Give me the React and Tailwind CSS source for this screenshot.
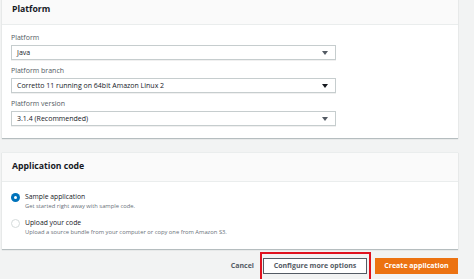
import React from "react";

function Select({ value, dark }) {
  return (
    <div className="h-[15px] w-[325px] border border-[#c6cdce] bg-white flex items-center justify-between pl-[5px] pr-[7px] shadow-[0_1px_0_0_rgba(0,0,0,0.06)]">
      <span className="text-[7px] text-[#16191f] leading-none">{value}</span>
      <svg width="6" height="4" viewBox="0 0 6 4">
        <path d="M0 0 L6 0 L3 4 Z" fill={dark ? "#16191f" : "#545b64"} />
      </svg>
    </div>
  );
}

function Field({ label, value, dark }) {
  return (
    <div className="flex flex-col">
      <div className="h-[13px] flex items-center text-[7px] text-[#545b64] leading-none pb-[2px]">{label}</div>
      <Select value={value} dark={dark} />
    </div>
  );
}

function Radio({ checked, title, sub }) {
  return (
    <div className="flex">
      <div className="w-[13px] h-[10px] flex items-center">
        {checked ? (
          <div className="w-[9px] h-[9px] rounded-full bg-[#0073bb] flex items-center justify-center">
            <div className="w-[3px] h-[3px] rounded-full bg-white" />
          </div>
        ) : (
          <div className="w-[9px] h-[9px] rounded-full border border-[#d5dbdb] bg-white" />
        )}
      </div>
      <div className="flex flex-col ml-[1px]">
        <div className="h-[10px] flex items-center text-[6.8px] text-[#16191f] leading-none">{title}</div>
        <div className="h-[9px] flex items-center text-[5.8px] text-[#687078] leading-none">{sub}</div>
      </div>
    </div>
  );
}

export default function App() {
  return (
    <div
      className="w-[474px] h-[279px] bg-[#f2f3f3] overflow-hidden"
      style={{ fontFamily: '"Open Sans", "Noto Sans", Arial, sans-serif' }}
    >
      <div className="w-[456px] ml-[2px] flex flex-col">
        <div className="-mt-[5px] bg-white shadow-[0_1px_1px_0_rgba(0,28,36,0.25)]">
          <div className="h-[30px] bg-[#fafafa] border-b border-[#eaeded] flex items-center pl-[10px] pt-[1px]">
            <span className="text-[8.7px] font-bold text-[#16191f]">Platform</span>
          </div>
          <div className="pt-[7px] pb-[12px] pl-[9px] flex flex-col gap-[5px]">
            <Field label="Platform" value="Java" />
            <Field label="Platform branch" value="Corretto 11 running on 64bit Amazon Linux 2" dark />
            <Field label="Platform version" value="3.1.4 (Recommended)" />
          </div>
        </div>

        <div className="mt-[14px] bg-white shadow-[0_1px_1px_0_rgba(0,28,36,0.25)] border-t border-[#eaeded]">
          <div className="h-[29px] bg-[#fafafa] border-b border-[#eaeded] flex items-center pl-[10px]">
            <span className="text-[8.7px] font-bold text-[#16191f]">Application code</span>
          </div>
          <div className="pt-[10px] pb-[12px] pl-[9px] flex flex-col gap-[7px]">
            <Radio checked title="Sample application" sub="Get started right away with sample code." />
            <Radio
              title="Upload your code"
              sub="Upload a source bundle from your computer or copy one from Amazon S3."
            />
          </div>
        </div>

        <div className="mt-[9px] flex justify-end items-center">
          <span className="text-[7px] font-bold text-[#545b64] mr-[9px]">Cancel</span>
          <div className="relative">
            <div className="h-[16px] w-[104px] border border-[#545b64] bg-white flex items-center justify-center text-[7px] font-bold text-[#545b64]">
              Configure more options
            </div>
            <div className="absolute -left-[3px] -right-[4px] -top-[6px] -bottom-[8px] border-2 border-[#e0121f]" />
          </div>
          <div className="ml-[8px] h-[16px] w-[83px] bg-[#ec7211] flex items-center justify-center text-[7px] font-bold text-white">
            Create application
          </div>
        </div>
      </div>
    </div>
  );
}
